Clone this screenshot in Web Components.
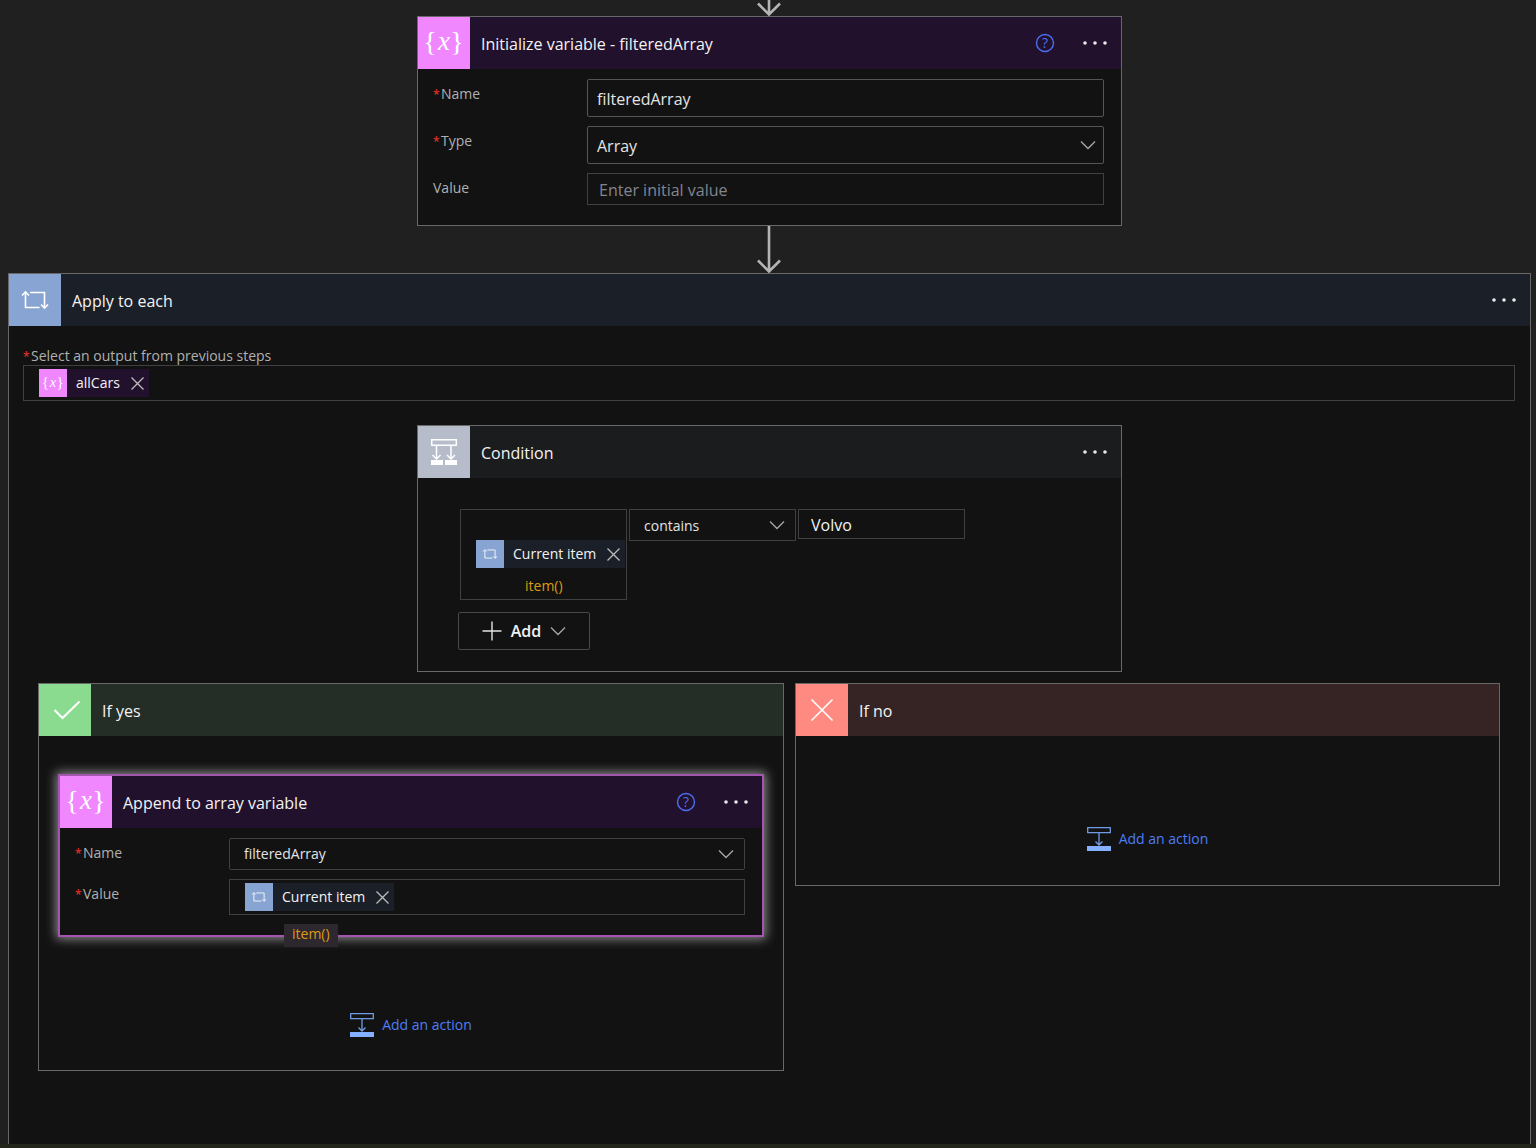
<!DOCTYPE html>
<html lang="en">
<head>
<meta charset="utf-8">
<title>Flow designer</title>
<style>
body {
  margin: 0;
  background: #202020;
  color: #f3f3f3;
  font: 16px/20px "Segoe UI", "Open Sans", "Noto Sans", sans-serif;
}
</style>
</head>
<body>
<flow-canvas>
  <flow-arrow size="16"></flow-arrow>
  <flow-card class="step" heading="Initialize variable - filteredArray" icon="variable" help menu>
    <flow-fields>
      <flow-field label="Name" kind="text" value="filteredArray" required></flow-field>
      <flow-field label="Type" kind="select" value="Array" required></flow-field>
      <flow-field label="Value" kind="text" placeholder="Enter initial value" slim></flow-field>
    </flow-fields>
  </flow-card>
  <flow-arrow size="47"></flow-arrow>
  <flow-card class="scope" heading="Apply to each" icon="loop" menu>
    <flow-scope>
      <flow-field slot="source" label="Select an output from previous steps" kind="tokens" stacked required>
        <flow-token icon="variable" name="allCars"></flow-token>
      </flow-field>
      <flow-card slot="step" class="step" heading="Condition" icon="condition" menu>
        <flow-condition operator="contains" value="Volvo">
          <flow-token icon="loop" name="Current item" expression="item()"></flow-token>
        </flow-condition>
      </flow-card>
      <flow-card slot="yes" heading="If yes" icon="yes">
        <flow-branch>
          <flow-card heading="Append to array variable" icon="variable" help menu selected>
            <flow-fields>
              <flow-field label="Name" kind="select" value="filteredArray" slim required></flow-field>
              <flow-field label="Value" kind="tokens" required>
                <flow-token icon="loop" name="Current item" expression="item()" floating></flow-token>
              </flow-field>
            </flow-fields>
          </flow-card>
        </flow-branch>
      </flow-card>
      <flow-card slot="no" heading="If no" icon="no">
        <flow-branch empty></flow-branch>
      </flow-card>
    </flow-scope>
  </flow-card>
</flow-canvas>

<script>
const ICONS = {
  variable: `<g fill="#fff" font-family="Liberation Serif, serif" text-anchor="middle">
      <text x="12" y="34" font-size="28">{</text>
      <text x="26" y="33" font-size="27" font-style="italic">x</text>
      <text x="39" y="34" font-size="28">}</text>
    </g>`,
  loop: `<g fill="none" stroke="#fff" stroke-width="1.6">
      <path d="M16.500 18v15.500h14M21 18.500h14.500v15"/>
      <path d="M13 21.500l3.500-3.500 3.500 3.500M32 30.500l3.500 3.500 3.500-3.500"/>
    </g>`,
  condition: `<g fill="none" stroke="#fff" stroke-width="1.5">
      <path d="M13.700 13.700h24.600v5.600H13.700zM18.500 19.500V33M33 19.500V33"/>
      <path d="M14.500 29l4 4 4-4M29 29l4 4 4-4"/>
    </g>
    <path fill="#fff" d="M13 34h12v5H13zM27 34h12v5H27z"/>`,
  yes: '<path fill="none" stroke="#fff" stroke-width="2" d="M15.500 26l8 8L40.500 17.500"/>',
  no: '<path fill="none" stroke="#fff" stroke-width="1.6" d="M15.500 15.500l21 21M36.500 15.500l-21 21"/>'
};

const TONES = {
  variable: ['#f087ff', '#22112d'],
  loop: ['#87a4d2', '#1b1f27'],
  condition: ['#b6bcca', '#1b1c1e'],
  yes: ['#8adb8f', '#252e26'],
  no: ['#ff8a82', '#362323']
};

const CHEVRON = '<svg class="chevron" width="16" height="10" viewBox="0 0 16 10" aria-hidden="true"><path fill="none" stroke="#a8a8a8" stroke-width="1.3" d="M1 1.500l7 7 7-7"/></svg>';

class FlowElement extends HTMLElement {
  constructor() {
    super();
    this.attachShadow({mode: 'open'});
  }

  connectedCallback() {
    this.shadowRoot.innerHTML = `<style>* { box-sizing: border-box; }</style>${this.render()}`;
  }

  attr(name) {
    return this.getAttribute(name) || '';
  }
}

class FlowCanvas extends FlowElement {
  render() {
    return `
<style>
:host {
  display: flex;
  flex-direction: column;
  align-items: center;
  box-sizing: border-box;
  min-height: 100vh;
  padding: 0 5px 0 8px;
  border-bottom: 4px solid #23261a;
}
::slotted(.step) { width: 100%; max-width: 705px; }
::slotted(.scope) { width: 100%; flex: 1; border-bottom: 0; }
</style>
<slot></slot>`;
  }
}

class FlowArrow extends FlowElement {
  render() {
    const size = Number(this.attr('size'));
    return `
<style>
:host { display: block; }
svg { display: block; }
</style>
<svg width="25" height="${size}" viewBox="0 0 25 ${size}" aria-hidden="true">
  <path fill="none" stroke="#b4b4b4" stroke-width="2.600" d="M12 0v${size - 2}M1 ${size - 12.5}l11 11 11-11"/>
</svg>`;
  }
}

class FlowIcon extends FlowElement {
  render() {
    const name = this.attr('name');
    return `
<style>
:host { display: block; flex: none; width: 52px; height: 52px; background: ${TONES[name][0]}; }
svg { display: block; width: 100%; height: 100%; }
</style>
<svg viewBox="0 0 52 52" aria-hidden="true">${ICONS[name]}</svg>`;
  }
}

class FlowCard extends FlowElement {
  render() {
    const help = this.hasAttribute('help') ? `
  <button class="help" aria-label="Help">
    <svg width="20" height="20" viewBox="0 0 20 20">
      <circle cx="10" cy="10" r="8.500" fill="none" stroke="#4a6ff0" stroke-width="1.400"/>
      <text x="10" y="15" text-anchor="middle" font-size="14" fill="#4a6ff0">?</text>
    </svg>
  </button>` : '';
    const menu = this.hasAttribute('menu') ? `
  <button class="menu" aria-label="More commands">
    <svg width="24" height="4" viewBox="0 0 24 4" fill="#e8e8e8">
      <circle cx="2" cy="2" r="1.800"/><circle cx="12" cy="2" r="1.800"/><circle cx="22" cy="2" r="1.800"/>
    </svg>
  </button>` : '';
    return `
<style>
:host {
  display: block;
  box-sizing: border-box;
  border: 1px solid #686868;
  background: #121212;
}
:host([selected]) {
  border: 2px solid #a355b0;
  box-shadow: 0 0 10px 2px #8a8a8a;
}
header {
  display: flex;
  align-items: center;
  padding-right: 14px;
  background: ${TONES[this.attr('icon')][1]};
}
h2 { flex: 1; margin: 0 0 0 11px; padding-top: 2px; font: inherit; }
button { display: flex; padding: 0; border: 0; background: none; font: inherit; }
.menu { margin-left: 28px; }
</style>
<header>
  <flow-icon name="${this.attr('icon')}"></flow-icon>
  <h2>${this.attr('heading')}</h2>${help}${menu}
</header>
<slot></slot>`;
  }
}

class FlowFields extends FlowElement {
  render() {
    return `
<style>
:host { display: flex; flex-direction: column; gap: 9px; padding: 10px 17px 20px 15px; }
</style>
<slot></slot>`;
  }
}

class FlowField extends FlowElement {
  control() {
    const value = this.attr('value');
    switch (this.attr('kind')) {
      case 'select':
        return `<div class="select"><select id="control"><option>${value}</option></select>${CHEVRON}</div>`;
      case 'tokens':
        return '<div class="tokens" id="control" role="group" aria-labelledby="label"><slot></slot></div>';
      default:
        return `<input id="control" type="text" value="${value}" placeholder="${this.attr('placeholder')}">`;
    }
  }

  render() {
    const star = this.hasAttribute('required') ? '<span class="star">*</span>' : '';
    return `
<style>
:host { display: grid; grid-template-columns: 154px 1fr; align-items: start; }
:host([stacked]) { display: block; }
label { display: block; margin-top: 5px; color: #b0b0b0; font-size: 14px; line-height: 20px; }
:host([stacked]) label { margin: 0; line-height: 18px; }
.star { display: inline-block; width: 8px; color: #e0302a; font-size: 12px; font-weight: 600; line-height: 12px; }
input, select {
  display: block;
  width: 100%;
  height: 38px;
  margin: 0;
  padding: 2px 9px 0;
  border: 1px solid #555;
  border-radius: 2px;
  background: #121212;
  color: #e4e4e4;
  font: inherit;
  appearance: none;
}
:host([slim]) input { height: 32px; padding: 2px 11px 0; border-color: #404040; border-radius: 0; }
:host([slim]) select { height: 32px; padding: 0 14px; border-color: #404040; font-size: 14px; }
input::placeholder { color: #82858f; opacity: 1; }
.select { display: grid; align-items: center; }
.select > * { grid-area: 1 / 1; }
.chevron { justify-self: end; margin-right: 8px; pointer-events: none; }
:host([slim]) .chevron { margin-right: 11px; }
.tokens { display: flex; padding: 3px 15px; border: 1px solid #404040; }
</style>
<label id="label" for="control">${star}${this.attr('label')}</label>
${this.control()}`;
  }
}

class FlowToken extends FlowElement {
  render() {
    const icon = this.attr('icon');
    const expression = this.attr('expression');
    return `
<style>
:host { display: block; position: relative; font-size: 14px; }
.token { display: flex; align-items: center; width: max-content; height: 28px; background: ${TONES[icon][1]}; }
flow-icon { width: 28px; height: 28px; }
.name { margin: 0 6px 0 9px; white-space: nowrap; }
button { display: flex; padding: 5px; border: 0; background: none; }
.expression {
  display: block;
  width: max-content;
  margin: 8px 0 0 41px;
  padding: 0 8px 4px;
  color: #dd9a13;
  line-height: 19px;
}
:host([floating]) .expression {
  position: absolute;
  top: 41px;
  left: 39px;
  margin: 0;
  background: #2d272e;
}
</style>
<div class="token">
  <flow-icon name="${icon}"></flow-icon>
  <span class="name">${this.attr('name')}</span>
  <button aria-label="Remove ${this.attr('name')}">
    <svg width="13" height="13" viewBox="0 0 13 13"><path fill="none" stroke="#bdbdbd" stroke-width="1.300" d="M.5.5l12 12M12.500.5l-12 12"/></svg>
  </button>
</div>
${expression ? `<span class="expression">${expression}</span>` : ''}`;
  }
}

class FlowCondition extends FlowElement {
  render() {
    return `
<style>
:host { display: block; padding: 31px 40px 21px; }
.row {
  display: grid;
  grid-template-columns: repeat(3, 167px);
  gap: 2px;
  align-items: start;
  margin: 0 0 12px 2px;
}
.operand { padding: 30px 0 0 15px; border: 1px solid #404040; }
select, input {
  width: 100%;
  margin: 0;
  border: 1px solid #404040;
  border-radius: 0;
  background: #121212;
  color: #e4e4e4;
  font: inherit;
  appearance: none;
}
select { height: 32px; padding: 2px 14px 0; font-size: 14px; }
input { height: 30px; padding: 2px 12px 0; color: #f3f3f3; }
.select { display: grid; align-items: center; }
.select > * { grid-area: 1 / 1; }
.select .chevron { justify-self: end; margin-right: 11px; pointer-events: none; }
.add {
  display: flex;
  align-items: center;
  justify-content: center;
  gap: 9px;
  width: 132px;
  height: 38px;
  padding: 0;
  border: 1px solid #484848;
  border-radius: 2px;
  background: #121212;
  color: #f3f3f3;
  font: inherit;
  font-weight: 600;
}
</style>
<div class="row">
  <div class="operand"><slot></slot></div>
  <div class="select">
    <select aria-label="Operator"><option>${this.attr('operator')}</option></select>${CHEVRON}
  </div>
  <input type="text" aria-label="Value" value="${this.attr('value')}">
</div>
<button class="add">
  <svg width="20" height="20" viewBox="0 0 20 20" aria-hidden="true"><path stroke="#e4e4e4" stroke-width="1.400" d="M10 .5v19M.5 10h19"/></svg>
  Add
  ${CHEVRON}
</button>`;
  }
}

class FlowScope extends FlowElement {
  render() {
    return `
<style>
:host { display: block; padding: 21px 0 30px; }
.source { padding: 0 15px 24px 14px; }
.step { display: grid; grid-template-columns: minmax(0, 705px); justify-content: center; }
.branches {
  display: grid;
  grid-template-columns: 746fr 705fr;
  gap: 11px;
  align-items: start;
  padding: 11px 30px 0 29px;
}
</style>
<div class="source"><slot name="source"></slot></div>
<div class="step"><slot name="step"></slot></div>
<div class="branches">
  <slot name="yes"></slot>
  <slot name="no"></slot>
</div>`;
  }
}

class FlowBranch extends FlowElement {
  render() {
    return `
<style>
:host { display: block; padding: 38px 19px 33px; }
:host([empty]) { padding: 15px 19px 34px; }
button {
  display: flex;
  align-items: center;
  gap: 8px;
  margin: 76px auto 0;
  padding: 0;
  border: 0;
  background: none;
  color: #4f7df3;
  font: inherit;
  font-size: 14px;
  line-height: 24px;
}
</style>
<slot></slot>
<button>
  <svg width="24" height="24" viewBox="0 0 24 24" aria-hidden="true">
    <path fill="none" stroke="#6f9ae6" stroke-width="1.300" d="M.7.7h22.600v5H.7zM12 6v12M8.500 14.500l3.500 3.500 3.500-3.500"/>
    <path fill="#84b0ff" d="M0 19h24v5H0z"/>
  </svg>
  Add an action
</button>`;
  }
}

customElements.define('flow-canvas', FlowCanvas);
customElements.define('flow-arrow', FlowArrow);
customElements.define('flow-icon', FlowIcon);
customElements.define('flow-card', FlowCard);
customElements.define('flow-fields', FlowFields);
customElements.define('flow-field', FlowField);
customElements.define('flow-token', FlowToken);
customElements.define('flow-condition', FlowCondition);
customElements.define('flow-scope', FlowScope);
customElements.define('flow-branch', FlowBranch);
</script>
</body>
</html>
